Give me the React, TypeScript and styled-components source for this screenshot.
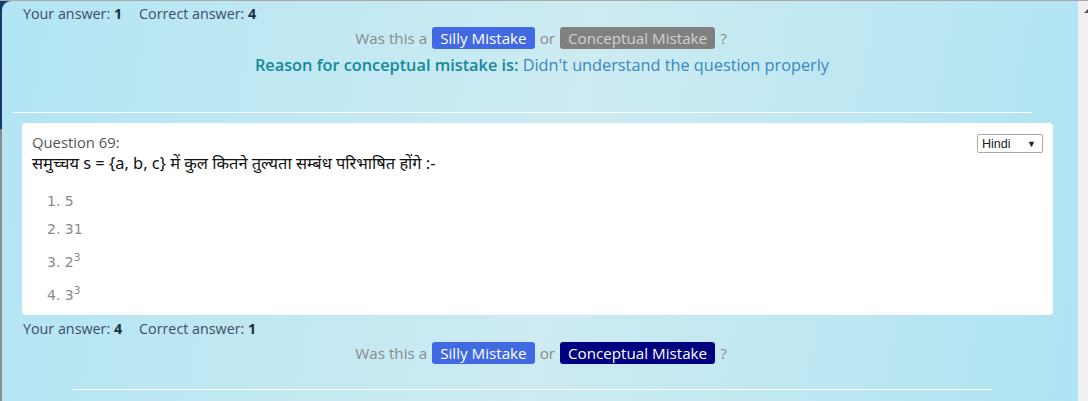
import React from 'react';
import styled, { createGlobalStyle } from 'styled-components';

const GlobalStyle = createGlobalStyle`
  html, body {
    margin: 0;
    padding: 0;
    background: #f0f0f0;
    overflow: hidden;
  }
`;

interface Attempt {
    yours: string;
    correct: string;
    picked: 'silly' | 'conceptual';
    reason?: string;
}

const Frame = styled.div`
    display: flex;
    height: 401px;
    border-top: 1px solid #a9a9a9;
    box-sizing: border-box;
    background: linear-gradient(to bottom, #17386b 0, #17386b 128px, #8a8a8a 128px);
    padding-left: 2px;
`;

const Panel = styled.div`
    flex: 1;
    border-top-left-radius: 9px;
    background: linear-gradient(100deg, #b2e5f4 0%, #cdebf1 52%, #afe4f4 100%);
    padding: 4px 25px 0 20px;
    font-family: "Open Sans", "Liberation Sans", sans-serif;
    overflow: hidden;
`;

const Scrollbar = styled.div`
    width: 10px;
    background: #f0f0f0;
    display: flex;
    justify-content: flex-end;
`;

const UpArrow = styled.div`
    margin-top: 8px;
    width: 0;
    height: 0;
    border-left: 4px solid transparent;
    border-bottom: 4px solid #505050;
`;

const AnswerRow = styled.div<{ $top: number }>`
    display: flex;
    gap: 17px;
    font-size: 14.3px;
    line-height: 18px;
    color: #3d4c68;
    padding-left: 1px;
    margin-top: ${p => p.$top}px;
    b {
        color: #1f2d40;
    }
`;

const AskRow = styled.div`
    display: flex;
    justify-content: center;
    align-items: center;
    gap: 5px;
    font-size: 15.2px;
    color: #8a8a8a;
    height: 22px;
    margin-top: 4px;
    padding-left: 7px;
`;

const Choice = styled.span<{ $tone: 'silly' | 'plain' | 'active' }>`
    display: inline-block;
    height: 22px;
    line-height: 22px;
    padding: 0 8px;
    border-radius: 3px;
    background: ${p => p.$tone === 'silly' ? '#4169e1' : p.$tone === 'active' ? '#000080' : '#808080'};
    color: ${p => p.$tone === 'plain' ? '#d0d0d0' : '#ffffff'};
`;

const Reason = styled.div`
    text-align: center;
    font-size: 16.3px;
    line-height: 20px;
    margin-top: 6px;
    padding-left: 9px;
    color: #3a88bd;
    b {
        color: #14899a;
        font-weight: 600;
    }
`;

const Rule = styled.div<{ $left: number; $right: number; $top: number }>`
    height: 1px;
    background: #ffffff;
    margin: ${p => p.$top}px ${p => p.$right}px 0 ${p => p.$left}px;
`;

const Card = styled.div`
    background: #ffffff;
    border-radius: 4px;
    margin-top: 10px;
    padding: 11px 10px 2px 10px;
`;

const CardHead = styled.div`
    display: flex;
    justify-content: space-between;
    align-items: flex-start;
`;

const QNum = styled.div`
    font-size: 14.8px;
    line-height: 16px;
    color: #555555;
`;

const LangSelect = styled.div`
    width: 66px;
    height: 19px;
    box-sizing: border-box;
    border: 1px solid #a9a9a9;
    border-radius: 2px;
    display: flex;
    align-items: center;
    justify-content: space-between;
    padding: 0 6px 0 4px;
    font-family: "Liberation Sans", Arial, sans-serif;
    font-size: 12.5px;
    color: #222;
    span:last-child {
        font-size: 9px;
    }
`;

const QText = styled.div`
    font-size: 16.4px;
    line-height: 20px;
    color: #111;
    font-family: "Noto Sans", "DejaVu Sans", sans-serif;
`;

const Options = styled.ol`
    list-style: none;
    margin: 18px 0 0 0;
    padding: 0 0 0 15px;
    color: #8a8a8a;
    font-family: "DejaVu Sans", "Liberation Sans", sans-serif;
    font-size: 14px;
    sup {
        font-size: 10.5px;
        line-height: 0;
    }
`;

const Option = styled.li<{ $tall?: boolean }>`
    line-height: 20px;
    margin-bottom: 8px;
    padding-top: ${p => p.$tall ? 5 : 0}px;
`;

const attempts: Attempt[] = [
    { yours: '1', correct: '4', picked: 'silly', reason: "Didn't understand the question properly" },
    { yours: '4', correct: '1', picked: 'conceptual' },
];

const Feedback = ({ a, top }: { a: Attempt; top: number }) => (
    <>
        <AnswerRow $top={top}>
            <span>Your answer: <b>{a.yours}</b></span>
            <span>Correct answer: <b>{a.correct}</b></span>
        </AnswerRow>
        <AskRow>
            <span>Was this a</span>
            <Choice $tone="silly">Silly Mistake</Choice>
            <span>or</span>
            <Choice $tone={a.picked === 'conceptual' ? 'active' : 'plain'}>Conceptual Mistake</Choice>
            <span>?</span>
        </AskRow>
        {a.reason && (
            <Reason><b>Reason for conceptual mistake is:</b> {a.reason}</Reason>
        )}
    </>
);

const App = () => {
    return (
        <>
            <GlobalStyle />
            <Frame>
                <Panel>
                    <Feedback a={attempts[0]} top={0} />
                    <Rule $top={37} $left={-9} $right={21} />
                    <Card>
                        <CardHead>
                            <QNum>Question 69:</QNum>
                            <LangSelect><span>Hindi</span><span>▼</span></LangSelect>
                        </CardHead>
                        <QText>समुच्चय s = {'{'}a, b, c{'}'} में कुल कितने तुल्यता सम्बंध परिभाषित होंगे :-</QText>
                        <Options>
                            <Option>1. 5</Option>
                            <Option>2. 31</Option>
                            <Option $tall>3. 2<sup>3</sup></Option>
                            <Option $tall>4. 3<sup>3</sup></Option>
                        </Options>
                    </Card>
                    <Feedback a={attempts[1]} top={5} />
                    <Rule $top={25} $left={50} $right={61} />
                </Panel>
                <Scrollbar><UpArrow /></Scrollbar>
            </Frame>
        </>
    );
};

export default App;
